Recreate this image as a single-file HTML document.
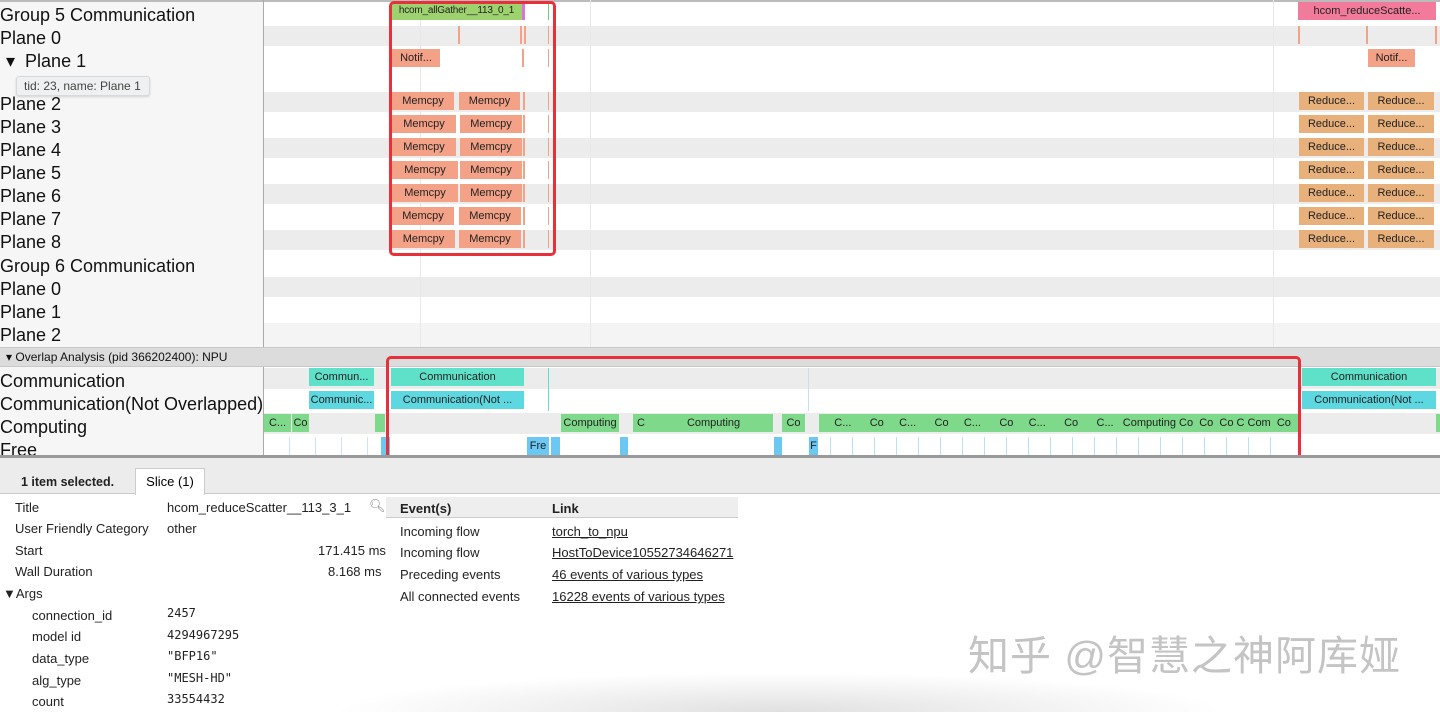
<!DOCTYPE html><html><head><meta charset="utf-8"><style>
body{margin:0;width:1440px;height:705px;overflow:hidden;background:#fff;font-family:"Liberation Sans",sans-serif;position:relative}
div{position:absolute;box-sizing:border-box}
.l{left:0;font-size:18px;color:#111;white-space:nowrap}
.s{font-size:11px;text-align:center;color:#222;overflow:hidden;white-space:nowrap;line-height:18px;height:18px}
.g{left:264px;width:1176px;background:#ececec}
.v{width:1px;background:#e8e8e8;top:0;height:347px}
.t{width:2px;background:#f4a287}
.d{font-size:13px;color:#222;white-space:nowrap}
.u{text-decoration:underline}
</style></head><body>
<div style="left:0;top:0;width:263px;height:347px;background:#f6f6f6"></div>
<div style="left:0;top:0;width:1440px;height:2px;background:#bbb"></div>
<div style="left:263px;top:0;width:1px;height:347px;background:#aaa"></div>
<div class="g" style="top:26px;height:20px"></div>
<div class="g" style="top:92px;height:20px"></div>
<div class="g" style="top:138px;height:20px"></div>
<div class="g" style="top:184px;height:20px"></div>
<div class="g" style="top:230px;height:20px"></div>
<div class="g" style="top:277px;height:20px"></div>
<div class="g" style="top:323px;height:24px;background:#f4f4f4"></div>
<div class="v" style="left:420px"></div><div class="v" style="left:590px"></div><div class="v" style="left:1273px"></div>
<div class="l" style="top:5px">Group 5 Communication</div>
<div class="l" style="top:28px">Plane 0</div>
<div class="l" style="top:51px;left:6px">▾&nbsp; Plane 1</div>
<div class="l" style="top:94px">Plane 2</div>
<div class="l" style="top:117px">Plane 3</div>
<div class="l" style="top:140px">Plane 4</div>
<div class="l" style="top:163px">Plane 5</div>
<div class="l" style="top:186px">Plane 6</div>
<div class="l" style="top:209px">Plane 7</div>
<div class="l" style="top:232px">Plane 8</div>
<div class="l" style="top:256px">Group 6 Communication</div>
<div class="l" style="top:279px">Plane 0</div>
<div class="l" style="top:302px">Plane 1</div>
<div class="l" style="top:325px">Plane 2</div>
<div style="left:16px;top:76px;width:134px;height:20px;background:#eef0f1;border:1px solid #d7dadc;border-radius:3px;font-size:12px;color:#444;line-height:18px;padding-left:7px;box-shadow:0 1px 2px rgba(0,0,0,.15)">tid: 23, name: Plane 1</div>
<div class="s" style="left:391px;top:2px;width:131px;background:#9ed26f;font-size:10px;letter-spacing:-0.2px">hcom_allGather__113_0_1</div>
<div style="left:522px;top:2px;width:3px;height:18px;background:#e070e0"></div>
<div style="left:548px;top:2px;width:1px;height:18px;background:#7c7"></div>
<div class="s" style="left:1298px;top:2px;width:138px;background:#f27a9a">hcom_reduceScatte...</div>
<div class="t" style="left:458px;top:26px;height:18px"></div><div class="t" style="left:520px;top:26px;height:18px"></div><div class="t" style="left:524px;top:26px;height:18px"></div><div class="t" style="left:548px;top:26px;height:18px;width:1px"></div>
<div class="t" style="left:1298px;top:26px;height:18px"></div><div class="t" style="left:1366px;top:26px;height:18px"></div><div class="t" style="left:1435px;top:26px;height:18px"></div>
<div class="s" style="left:392px;top:49px;width:48px;background:#f4a287">Notif...</div>
<div class="t" style="left:522px;top:49px;height:18px"></div><div class="t" style="left:548px;top:49px;height:18px;width:1px"></div>
<div class="s" style="left:1368px;top:49px;width:47px;background:#f4a287">Notif...</div>
<div class="s" style="left:392px;top:92px;width:62px;background:#f4a287">Memcpy</div><div class="s" style="left:459px;top:92px;width:61px;background:#f4a287">Memcpy</div>
<div class="s" style="left:392px;top:115px;width:64px;background:#f4a287">Memcpy</div><div class="s" style="left:460px;top:115px;width:62px;background:#f4a287">Memcpy</div>
<div class="s" style="left:392px;top:138px;width:64px;background:#f4a287">Memcpy</div><div class="s" style="left:460px;top:138px;width:62px;background:#f4a287">Memcpy</div>
<div class="s" style="left:392px;top:161px;width:66px;background:#f4a287">Memcpy</div><div class="s" style="left:460px;top:161px;width:62px;background:#f4a287">Memcpy</div>
<div class="s" style="left:392px;top:184px;width:66px;background:#f4a287">Memcpy</div><div class="s" style="left:460px;top:184px;width:62px;background:#f4a287">Memcpy</div>
<div class="s" style="left:392px;top:207px;width:62px;background:#f4a287">Memcpy</div><div class="s" style="left:459px;top:207px;width:62px;background:#f4a287">Memcpy</div>
<div class="s" style="left:392px;top:230px;width:63px;background:#f4a287">Memcpy</div><div class="s" style="left:459px;top:230px;width:62px;background:#f4a287">Memcpy</div>
<div style="left:523px;top:92px;width:2px;height:156px;background:repeating-linear-gradient(#f4a287 0 18px,transparent 18px 23px)"></div>
<div style="left:548px;top:92px;width:1px;height:156px;background:repeating-linear-gradient(#f4a287 0 18px,transparent 18px 23px)"></div>
<div class="s" style="left:1299px;top:92px;width:65px;background:#e8b07a">Reduce...</div><div class="s" style="left:1368px;top:92px;width:66px;background:#e8b07a">Reduce...</div>
<div class="s" style="left:1299px;top:115px;width:65px;background:#e8b07a">Reduce...</div><div class="s" style="left:1368px;top:115px;width:66px;background:#e8b07a">Reduce...</div>
<div class="s" style="left:1299px;top:138px;width:65px;background:#e8b07a">Reduce...</div><div class="s" style="left:1368px;top:138px;width:66px;background:#e8b07a">Reduce...</div>
<div class="s" style="left:1299px;top:161px;width:65px;background:#e8b07a">Reduce...</div><div class="s" style="left:1368px;top:161px;width:66px;background:#e8b07a">Reduce...</div>
<div class="s" style="left:1299px;top:184px;width:65px;background:#e8b07a">Reduce...</div><div class="s" style="left:1368px;top:184px;width:66px;background:#e8b07a">Reduce...</div>
<div class="s" style="left:1299px;top:207px;width:65px;background:#e8b07a">Reduce...</div><div class="s" style="left:1368px;top:207px;width:66px;background:#e8b07a">Reduce...</div>
<div class="s" style="left:1299px;top:230px;width:65px;background:#e8b07a">Reduce...</div><div class="s" style="left:1368px;top:230px;width:66px;background:#e8b07a">Reduce...</div>
<div style="left:389px;top:1px;width:167px;height:255px;border:3px solid #e8303a;border-radius:5px"></div>
<div style="left:0;top:347px;width:1440px;height:20px;background:#dcdcdc;border-top:1px solid #c8c8c8;border-bottom:1px solid #c8c8c8;font-size:12px;line-height:18px;padding-left:6px;color:#111">▾ Overlap Analysis (pid 366202400): NPU</div>
<div style="left:0;top:367px;width:263px;height:89px;background:#f6f6f6"></div>
<div style="left:263px;top:367px;width:1px;height:89px;background:#aaa"></div>
<div class="g" style="top:368px;height:21px"></div>
<div class="g" style="top:413px;height:21px"></div>
<div class="l" style="top:371px">Communication</div>
<div class="l" style="top:394px">Communication(Not Overlapped)</div>
<div class="l" style="top:417px">Computing</div>
<div class="l" style="top:440px">Free</div>
<div class="s" style="left:309px;top:368px;width:65px;background:#5fe0c8">Commun...</div>
<div class="s" style="left:391px;top:368px;width:133px;background:#5fe0c8">Communication</div>
<div class="s" style="left:1302px;top:368px;width:134px;background:#5fe0c8">Communication</div>
<div class="s" style="left:309px;top:391px;width:65px;background:#5ed8e0">Communic...</div>
<div class="s" style="left:391px;top:391px;width:133px;background:#5ed8e0">Communication(Not ...</div>
<div class="s" style="left:1302px;top:391px;width:134px;background:#5ed8e0">Communication(Not ...</div>
<div style="left:548px;top:368px;width:1px;height:43px;background:#5fe0c8"></div>
<div style="left:808px;top:368px;width:1px;height:43px;background:#cde"></div>
<div class="s" style="left:264px;top:414px;width:27px;background:#7ed98a">C...</div>
<div class="s" style="left:292px;top:414px;width:17px;background:#7ed98a">Co</div>
<div class="s" style="left:375px;top:414px;width:10px;background:#7ed98a"></div>
<div class="s" style="left:561px;top:414px;width:58px;background:#7ed98a">Computing</div>
<div class="s" style="left:633px;top:414px;width:140px;background:#7ed98a;text-align:left;padding-left:4px">C<span style="margin-left:42px">Computing</span></div>
<div class="s" style="left:782px;top:414px;width:23px;background:#7ed98a">Co</div>
<div class="s" style="left:819px;top:414px;width:479px;background:#7ed98a;text-align:left;word-spacing:0">&nbsp;&nbsp;&nbsp;&nbsp;&nbsp;C...&nbsp;&nbsp;&nbsp;&nbsp;&nbsp;&nbsp;Co&nbsp;&nbsp;&nbsp;&nbsp;&nbsp;C...&nbsp;&nbsp;&nbsp;&nbsp;&nbsp;&nbsp;Co&nbsp;&nbsp;&nbsp;&nbsp;&nbsp;C...&nbsp;&nbsp;&nbsp;&nbsp;&nbsp;&nbsp;Co&nbsp;&nbsp;&nbsp;&nbsp;&nbsp;C...&nbsp;&nbsp;&nbsp;&nbsp;&nbsp;&nbsp;Co&nbsp;&nbsp;&nbsp;&nbsp;&nbsp;&nbsp;C...&nbsp;&nbsp;&nbsp;Computing Co&nbsp; Co&nbsp; Co C Com&nbsp; Co</div>
<div class="s" style="left:1436px;top:414px;width:4px;background:#7ed98a"></div>
<div class="s" style="left:527px;top:437px;width:22px;background:#6ac8f2">Fre</div>
<div class="s" style="left:551px;top:437px;width:9px;background:#6ac8f2"></div>
<div class="s" style="left:381px;top:437px;width:9px;background:#6ac8f2"></div>
<div class="s" style="left:620px;top:437px;width:8px;background:#6ac8f2"></div>
<div class="s" style="left:774px;top:437px;width:8px;background:#6ac8f2"></div>
<div class="s" style="left:809px;top:437px;width:9px;background:#6ac8f2">F</div>
<div style="left:830px;top:437px;width:450px;height:18px;background:repeating-linear-gradient(90deg,#b8e2f4 0 1px,transparent 1px 22px)"></div>
<div style="left:264px;top:437px;width:120px;height:18px;background:repeating-linear-gradient(90deg,transparent 0 25px,#c8e6f4 25px 26px)"></div>
<div style="left:386px;top:356px;width:915px;height:115px;border:3px solid #e8303a;border-radius:5px"></div>
<div style="left:0;top:455px;width:1440px;height:3px;background:#9a9a9a"></div>
<div style="left:0;top:458px;width:1440px;height:36px;background:#ececec;border-bottom:1px solid #ccc"></div>
<div class="d" style="left:21px;top:475px;font-weight:bold;font-size:12.5px">1 item selected.</div>
<div style="left:135px;top:468px;width:70px;height:27px;background:#fff;border:1px solid #ccc;border-bottom:none;font-size:13px;line-height:26px;text-align:center">Slice (1)</div>
<div class="d" style="left:15px;top:500px">Title</div><div class="d" style="left:167px;top:500px">hcom_reduceScatter__113_3_1</div><div class="d" style="left:369px;top:498px;color:#888">🔍︎</div>
<div class="d" style="left:15px;top:521px">User Friendly Category</div><div class="d" style="left:167px;top:521px">other</div>
<div class="d" style="left:15px;top:543px">Start</div><div class="d" style="left:318px;top:543px">171.415 ms</div>
<div class="d" style="left:15px;top:564px">Wall Duration</div><div class="d" style="left:328px;top:564px">8.168 ms</div>
<div class="d" style="left:3px;top:586px">▼Args</div>
<div class="d" style="left:32px;top:608px">connection_id</div><div class="d" style="left:167px;top:606px;font-family:'DejaVu Sans Mono',monospace;font-size:12px">2457</div>
<div class="d" style="left:32px;top:629px">model id</div><div class="d" style="left:167px;top:628px;font-family:'DejaVu Sans Mono',monospace;font-size:12px">4294967295</div>
<div class="d" style="left:32px;top:651px">data_type</div><div class="d" style="left:167px;top:649px;font-family:'DejaVu Sans Mono',monospace;font-size:12px">"BFP16"</div>
<div class="d" style="left:32px;top:673px">alg_type</div><div class="d" style="left:167px;top:671px;font-family:'DejaVu Sans Mono',monospace;font-size:12px">"MESH-HD"</div>
<div class="d" style="left:32px;top:694px">count</div><div class="d" style="left:167px;top:692px;font-family:'DejaVu Sans Mono',monospace;font-size:12px">33554432</div>
<div style="left:386px;top:497px;width:352px;height:21px;background:#eee;border-bottom:1px solid #ccc"></div>
<div class="d" style="left:400px;top:501px;font-weight:bold">Event(s)</div><div class="d" style="left:552px;top:501px;font-weight:bold">Link</div>
<div class="d" style="left:400px;top:524px">Incoming flow</div><div class="d u" style="left:552px;top:524px">torch_to_npu</div>
<div class="d" style="left:400px;top:545px">Incoming flow</div><div class="d u" style="left:552px;top:545px">HostToDevice10552734646271</div>
<div class="d" style="left:400px;top:567px">Preceding events</div><div class="d u" style="left:552px;top:567px">46 events of various types</div>
<div class="d" style="left:400px;top:589px">All connected events</div><div class="d u" style="left:552px;top:589px">16228 events of various types</div>
<div style="left:330px;top:672px;width:900px;height:40px;background:radial-gradient(ellipse at 50% 100%,rgba(0,0,0,.12),transparent 70%)"></div>
<div style="left:968px;top:622px;font-size:41px;color:#c4c4c4;font-family:'Liberation Sans','Noto Sans CJK SC',sans-serif;white-space:nowrap;letter-spacing:1px">知乎 @智慧之神阿库娅</div>
</body></html>
